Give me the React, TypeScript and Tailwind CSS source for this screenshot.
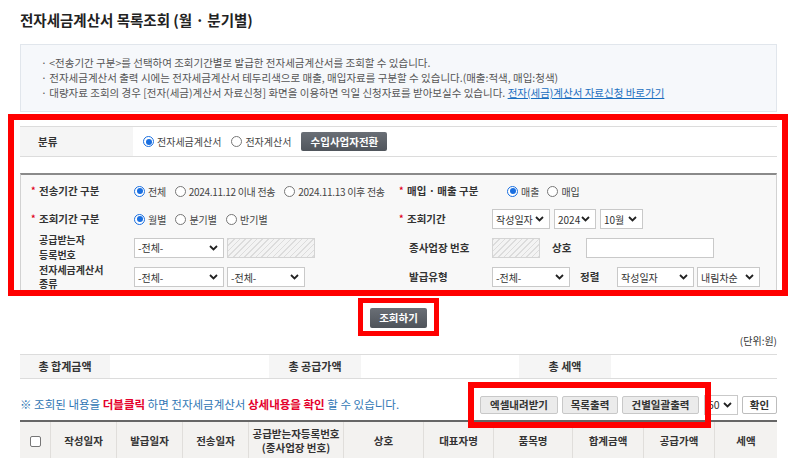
import React from 'react';

function Radio({ checked, label }: { checked?: boolean; label: string }) {
  return (
    <span className="flex items-center gap-[3px]">
      {checked ? (
        <span className="flex h-[11px] w-[11px] items-center justify-center rounded-full border-[1.5px] border-[#1a6fe0] bg-white">
          <span className="h-[6px] w-[6px] rounded-full bg-[#1a6fe0]" />
        </span>
      ) : (
        <span className="h-[11px] w-[11px] rounded-full border border-[#777] bg-white" />
      )}
      <span>{label}</span>
    </span>
  );
}

function Select({ value, className }: { value: string; className: string }) {
  return (
    <span
      className={`flex h-[20px] items-center justify-between border border-[#c9c9c9] bg-white pl-[3px] pr-[5px] text-[#333] ${className}`}
    >
      <span>{value}</span>
      <svg width="9" height="6" viewBox="0 0 9 6">
        <polyline points="1,1 4.5,4.5 8,1" fill="none" stroke="#222" strokeWidth="1.8" />
      </svg>
    </span>
  );
}

function Hatch({ className }: { className: string }) {
  return (
    <span
      className={`h-[20px] border border-[#d4d4d4] bg-[image:repeating-linear-gradient(135deg,#dcdcdc_0px,#dcdcdc_1px,#f3f3f3_1px,#f3f3f3_4px)] ${className}`}
    />
  );
}

function Label({ text, star, className }: { text: React.ReactNode; star?: boolean; className: string }) {
  return (
    <div className={`flex items-center font-bold text-[#333] ${className}`}>
      <span className="w-[8px] text-[9px] text-[#e0001b]">{star ? '*' : ''}</span>
      <span>{text}</span>
    </div>
  );
}

const columns = [
  { name: '작성일자', w: 'w-[66px]' },
  { name: '발급일자', w: 'w-[66px]' },
  { name: '전송일자', w: 'w-[66px]' },
  { name: 'reg', w: 'w-[95px]' },
  { name: '상호', w: 'w-[80px]' },
  { name: '대표자명', w: 'w-[70px]' },
  { name: '품목명', w: 'w-[79px]' },
  { name: '합계금액', w: 'w-[71px]' },
  { name: '공급가액', w: 'w-[71px]' },
  { name: '세액', w: 'flex-1' },
];

export default function App() {
  return (
    <div className="relative h-[458px] w-[800px] overflow-hidden bg-white font-['Noto_Sans_CJK_KR',sans-serif] text-[10px] text-[#444]">
      <div className="w-[777px] pl-[20px]">
        <div className="h-[44px] pt-[9px] text-[14.5px] font-bold text-[#222]">
          전자세금계산서 목록조회 (월 · 분기별)
        </div>

        <div className="h-[68px] border border-[#e1e6ec] bg-[#f6f8fb] pl-[20px] pt-[10px] text-[10.5px] leading-[15px] text-[#555]">
          <p>· &lt;전송기간 구분&gt;를 선택하여 조회기간별로 발급한 전자세금계산서를 조회할 수 있습니다.</p>
          <p>· 전자세금계산서 출력 시에는 전자세금계산서 테두리색으로 매출, 매입자료를 구분할 수 있습니다.(매출:적색, 매입:청색)</p>
          <p>
            · 대량자료 조회의 경우 [전자(세금)계산서 자료신청] 화면을 이용하면 익일 신청자료를 받아보실수 있습니다.{' '}
            <span className="text-[#1a6fc0] underline">전자(세금)계산서 자료신청 바로가기</span>
          </p>
        </div>

        <div className="mt-[14px] flex h-[31px] border-y border-[#dcdcdc]">
          <div className="flex w-[113px] items-center bg-[#f5f5f5] pl-[18px] text-[10.5px] font-bold text-[#333]">
            분류
          </div>
          <div className="flex items-center gap-[10px] pl-[10px] text-[#444]">
            <Radio checked label="전자세금계산서" />
            <Radio label="전자계산서" />
            <span className="flex h-[19px] w-[86px] items-center justify-center rounded-[2px] bg-[linear-gradient(#6a6f76,#50555c)] text-[10.5px] font-bold text-white">
              수입사업자전환
            </span>
          </div>
        </div>

        <div className="mt-[16px] h-[120px] border-x border-t-2 border-[#d2d2d2] border-t-[#8a8a8a] bg-[#f8f8f8] pt-[2px] text-[10px]">
          <div className="flex h-[28px] items-center">
            <Label star text="전송기간 구분" className="w-[113px] pl-[10px] text-[10.5px]" />
            <div className="flex w-[265px] items-center gap-[9px] tracking-[-0.3px]">
              <Radio checked label="전체" />
              <Radio label="2024.11.12 이내 전송" />
              <Radio label="2024.11.13 이후 전송" />
            </div>
            <Label star text="매입 · 매출 구분" className="w-[93px] text-[10.5px]" />
            <div className="ml-[15px] flex items-center gap-[8px]">
              <Radio checked label="매출" />
              <Radio label="매입" />
            </div>
          </div>
          <div className="flex h-[28px] items-center">
            <Label star text="조회기간 구분" className="w-[113px] pl-[10px] text-[10.5px]" />
            <div className="flex w-[265px] items-center gap-[9px]">
              <Radio checked label="월별" />
              <Radio label="분기별" />
              <Radio label="반기별" />
            </div>
            <Label star text="조회기간" className="w-[93px] text-[10.5px]" />
            <div className="flex items-center gap-[4px]">
              <Select value="작성일자" className="w-[58px]" />
              <Select value="2024" className="w-[42px]" />
              <Select value="10월" className="w-[43px]" />
            </div>
          </div>
          <div className="flex h-[29px] items-center">
            <Label
              text={
                <>
                  공급받는자
                  <br />
                  등록번호
                </>
              }
              className="w-[113px] pl-[10px] text-[10px] leading-[14.5px]"
            />
            <div className="flex w-[265px] items-center gap-[3px]">
              <Select value="-전체-" className="w-[90px]" />
              <Hatch className="w-[88px]" />
            </div>
            <Label text="종사업장 번호" className="w-[93px] pl-[2px] text-[10.5px]" />
            <div className="flex items-center">
              <Hatch className="w-[48px]" />
              <span className="ml-[12px] w-[34px] text-[10.5px] font-bold text-[#333]">상호</span>
              <span className="h-[20px] w-[128px] border border-[#c9c9c9] bg-white" />
            </div>
          </div>
          <div className="flex h-[30px] items-center">
            <Label
              text={
                <>
                  전자세금계산서
                  <br />
                  종류
                </>
              }
              className="w-[113px] pl-[10px] text-[10px] leading-[14.5px]"
            />
            <div className="flex w-[265px] items-center gap-[3px]">
              <Select value="-전체-" className="w-[90px]" />
              <Select value="-전체-" className="w-[78px]" />
            </div>
            <Label text="발급유형" className="w-[93px] pl-[2px] text-[10.5px]" />
            <div className="flex items-center">
              <Select value="-전체-" className="w-[78px]" />
              <span className="ml-[10px] w-[37px] text-[10.5px] font-bold text-[#333]">정렬</span>
              <Select value="작성일자" className="w-[77px]" />
              <Select value="내림차순" className="ml-[3px] w-[63px]" />
            </div>
          </div>
        </div>

        <div className="mt-[15px] flex justify-center">
          <span className="flex h-[20px] w-[57px] items-center justify-center rounded-[2px] bg-[linear-gradient(#6a6f76,#4e535a)] text-[10.5px] font-bold text-white">
            조회하기
          </span>
        </div>

        <div className="mt-[6px] text-right text-[10px] leading-[14px] text-[#333]">(단위:원)</div>

        <div className="mt-[6px] flex h-[25px] border-y border-[#dcdcdc] text-[11px] font-bold text-[#333]">
          <div className="flex w-[90px] items-center justify-center bg-[#f5f5f5]">총 합계금액</div>
          <div className="w-[159px]" />
          <div className="flex w-[92px] items-center justify-center bg-[#f5f5f5]">총 공급가액</div>
          <div className="w-[158px]" />
          <div className="flex w-[92px] items-center justify-center bg-[#f5f5f5]">총 세액</div>
          <div className="flex-1" />
        </div>

        <div className="mt-[17px] flex h-[18px] items-center justify-between">
          <div className="text-[11.5px] text-[#2f76b4]">
            ※ 조회된 내용을 <b className="text-[#e4002b]">더블클릭</b> 하면 전자세금계산서{' '}
            <b className="text-[#e4002b]">상세내용을 확인</b> 할 수 있습니다.
          </div>
          <div className="flex items-center gap-[4px] text-[10.5px] font-bold text-[#333]">
            <span className="flex h-[18px] w-[78px] items-center justify-center rounded-[2px] border border-[#c8c8c8] bg-[#ebebeb]">
              엑셀내려받기
            </span>
            <span className="flex h-[18px] w-[56px] items-center justify-center rounded-[2px] border border-[#c8c8c8] bg-[#ebebeb]">
              목록출력
            </span>
            <span className="flex h-[18px] w-[77px] items-center justify-center rounded-[2px] border border-[#c8c8c8] bg-[#ebebeb]">
              건별일괄출력
            </span>
            <Select value="50" className="ml-[1px] h-[18px] w-[34px] font-normal" />
            <span className="flex h-[18px] w-[35px] items-center justify-center rounded-[2px] border border-[#bdbdbd] bg-white">
              확인
            </span>
          </div>
        </div>

        <div className="mt-[6px] flex h-[40px] border-t-2 border-[#666] bg-[#f3f2f0] text-[10.5px] font-bold text-[#333]">
          <div className="flex w-[30px] items-center justify-center">
            <span className="h-[11px] w-[11px] rounded-[2px] border border-[#767676] bg-white" />
          </div>
          {columns.map((c) => (
            <div
              key={c.name}
              className={`flex items-center justify-center border-l border-[#e0dedb] text-center leading-[14px] ${c.w}`}
            >
              {c.name === 'reg' ? (
                <span>
                  공급받는자등록번호
                  <br />
                  (종사업장 번호)
                </span>
              ) : (
                c.name
              )}
            </div>
          ))}
        </div>
      </div>

      {/* red annotation boxes */}
      <div className="absolute left-[8px] top-[114px] h-[182px] w-[780px] border-[6px] border-[#ff0000]" />
      <div className="absolute left-[358px] top-[298px] h-[38px] w-[81px] border-[5px] border-[#ff0000]" />
      <div className="absolute left-[468px] top-[382px] h-[46px] w-[243px] border-[6px] border-[#ff0000]" />
    </div>
  );
}
